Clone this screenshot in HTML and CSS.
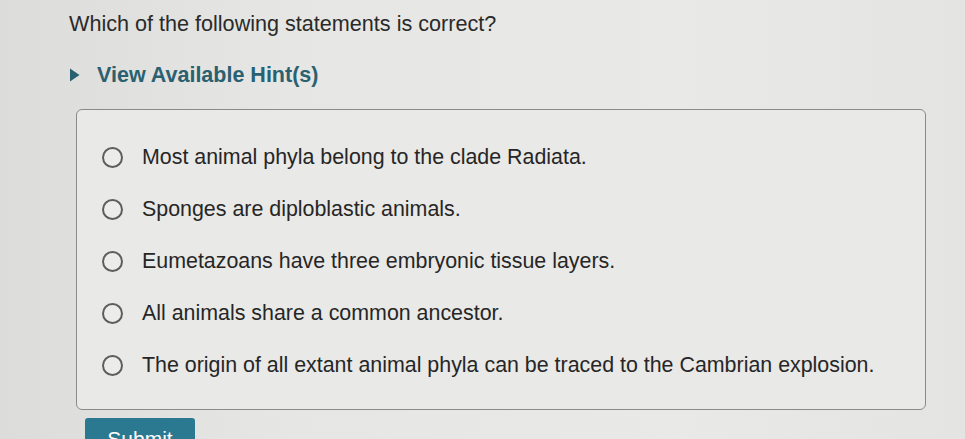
FILE: index.html
```html
<!DOCTYPE html>
<html lang="en">
<head>
<meta charset="utf-8">
<title>Question</title>
<link rel="stylesheet" href="styles.css">
</head>
<body>
<main class="page">
  <h1 class="question">Which of the following statements is correct?</h1>
  <div class="hint">
    <svg class="hint-arrow" width="11" height="14" viewBox="0 0 11 14"><path d="M1 0.5 L10.5 7 L1 13.5 Z" fill="#27606e"/></svg>
    <span class="hint-text">View Available Hint(s)</span>
  </div>
  <div class="options">
    <label class="option"><span class="radio"></span><span class="opt-text">Most animal phyla belong to the clade Radiata.</span></label>
    <label class="option"><span class="radio"></span><span class="opt-text">Sponges are diploblastic animals.</span></label>
    <label class="option"><span class="radio"></span><span class="opt-text">Eumetazoans have three embryonic tissue layers.</span></label>
    <label class="option"><span class="radio"></span><span class="opt-text">All animals share a common ancestor.</span></label>
    <label class="option"><span class="radio"></span><span class="opt-text">The origin of all extant animal phyla can be traced to the Cambrian explosion.</span></label>
  </div>
  <button class="submit">Submit</button>
</main>
</body>
</html>
```
FILE: styles.css
```css
html, body {
  margin: 0;
  padding: 0;
}
body {
  background: linear-gradient(90deg, #dcdcda 0%, #e6e6e4 30%, #e9e9e7 70%, #e4e4e2 100%);
  font-family: "Liberation Sans", Arial, sans-serif;
  color: #2b2b2b;
  height: 439px;
  overflow: hidden;
}
.page {
  padding: 11px 0 0 69px;
  display: flex;
  flex-direction: column;
  align-items: flex-start;
}
.question {
  margin: 0;
  font-size: 21.6px;
  line-height: 26px;
  font-weight: normal;
  color: #2a2a2a;
}
.hint {
  margin-top: 25px;
  display: flex;
  align-items: center;
  gap: 17px;
  height: 26px;
}
.hint-arrow {
  display: block;
}
.hint-text {
  font-size: 21.5px;
  font-weight: bold;
  color: #2a6170;
  line-height: 26px;
}
.options {
  margin-top: 21px;
  margin-left: 7px;
  width: 850px;
  height: 301px;
  border: 1px solid #8a8a88;
  border-radius: 6px;
  background: #e9e9e7;
  box-sizing: border-box;
  display: flex;
  flex-direction: column;
  padding-top: 34px;
  gap: 26px;
  padding-left: 25px;
}
.option {
  display: flex;
  align-items: center;
  gap: 19px;
  height: 26px;
}
.radio {
  width: 17px;
  height: 17px;
  border: 2px solid #5d5d5d;
  border-radius: 50%;
  background: #ececea;
  flex: none;
}
.opt-text {
  font-size: 21.4px;
  line-height: 26px;
  color: #262626;
}
.submit {
  margin-top: 8px;
  margin-left: 16px;
  width: 110px;
  height: 40px;
  border: none;
  border-radius: 3px;
  background: #2b7891;
  color: #ffffff;
  font-family: "Liberation Sans", Arial, sans-serif;
  font-size: 21px;
  padding: 9px 0 0;
  display: flex;
  justify-content: center;
  align-items: flex-start;
}
```
